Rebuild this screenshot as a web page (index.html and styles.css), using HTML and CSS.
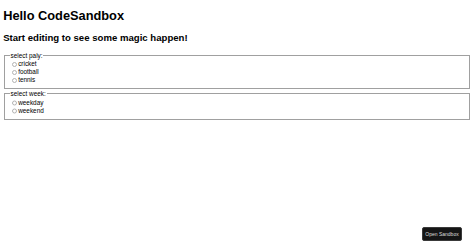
FILE: index.html
```html
<!DOCTYPE html>
<html lang="en">
<head>
    <meta charset="UTF-8">
    <meta name="viewport" content="width=device-width, initial-scale=1.0">
    <title>Hello CodeSandbox</title>
    <link rel="stylesheet" href="styles.css">
</head>
<body>
    <div class="App">
        <h1>Hello CodeSandbox</h1>
        <h2>Start editing to see some magic happen!</h2>

        <fieldset>
            <legend>select paly:</legend>
            <label><input type="radio" name="play" value="cricket">cricket</label>
            <label><input type="radio" name="play" value="football">football</label>
            <label><input type="radio" name="play" value="tennis">tennis</label>
        </fieldset>

        <fieldset class="week">
            <legend>select week:</legend>
            <label><input type="radio" name="week" value="weekday">weekday</label>
            <label><input type="radio" name="week" value="weekend">weekend</label>
        </fieldset>
    </div>

    <a class="open-sandbox" href="#">Open Sandbox</a>
</body>
</html>
```

FILE: styles.css
```css
body {
    margin: 3.2px;
    font-family: 'Liberation Sans', Arial, sans-serif;
    color: #000;
    background: #fff;
}

h1 {
    font-size: 12.8px;
    margin: 4.6px 0 9.6px;
}

h2 {
    font-size: 9.6px;
    margin: 8px 0 8.6px;
}

fieldset {
    margin: 0 0.8px;
    padding: 1.4px 4.8px 4px;
    border: 1px solid #a0a0a0;
    font-size: 6.4px;
}

fieldset.week {
    margin-top: 1px;
}

legend {
    padding: 0 0.8px;
}

label {
    display: block;
    height: 8px;
}

input[type="radio"] {
    width: 5.2px;
    height: 5.2px;
    margin: 1.2px 1.2px 0 2px;
    vertical-align: -0.8px;
    opacity: 0.55;
}

.open-sandbox {
    position: fixed;
    right: 12px;
    bottom: 7px;
    width: 40px;
    height: 14px;
    box-sizing: border-box;
    display: flex;
    align-items: center;
    justify-content: center;
    background: #151515;
    color: #ddd;
    font-size: 5px;
    border-radius: 2px;
    border: 1px solid #3a3a3a;
    text-decoration: none;
}
```
